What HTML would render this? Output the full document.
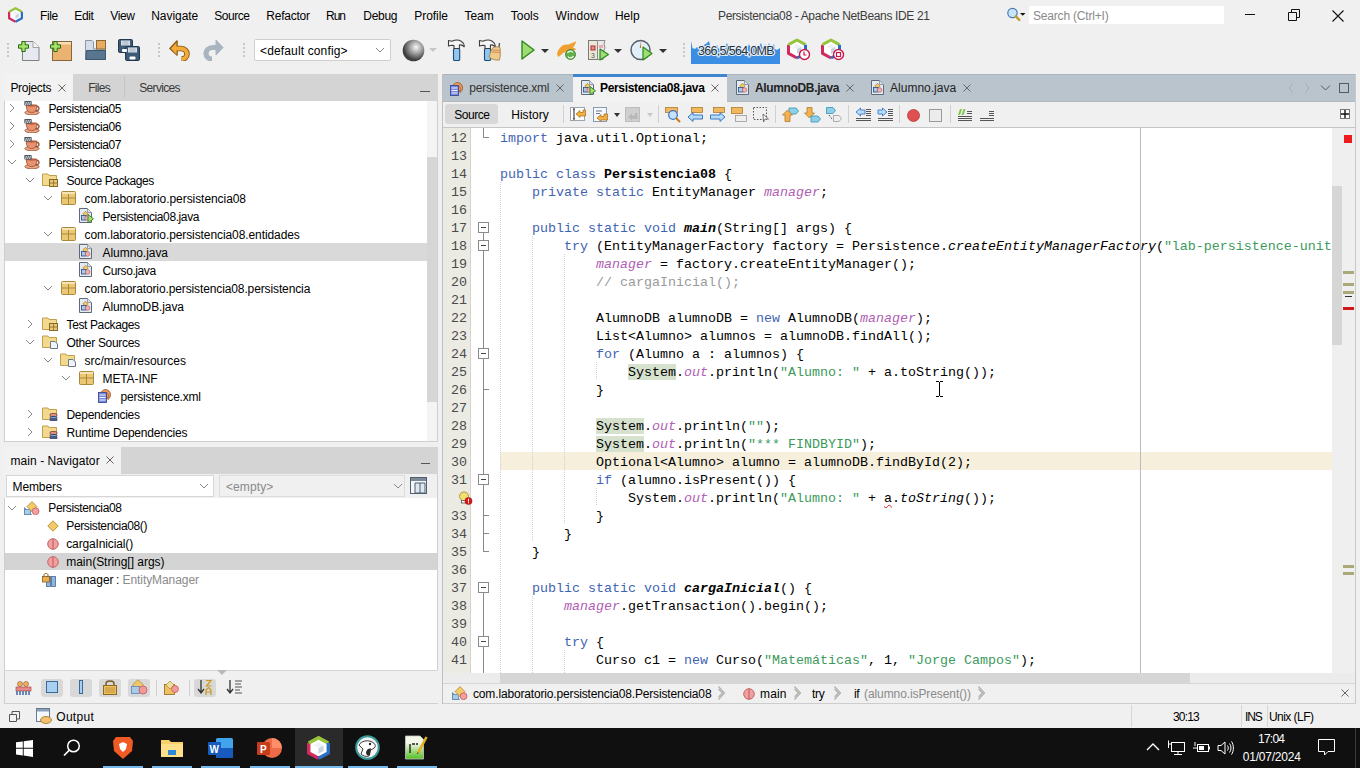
<!DOCTYPE html>
<html><head><meta charset="utf-8">
<style>
*{box-sizing:border-box;margin:0;padding:0}
html,body{width:1360px;height:768px;overflow:hidden;background:#f0f0f0;font-family:"Liberation Sans",sans-serif;font-size:12px;color:#000}
.a{position:absolute;overflow:visible}
.t{position:absolute;white-space:nowrap;line-height:14px;letter-spacing:-0.3px}
.l{position:absolute;left:500px;width:832px;overflow:hidden;white-space:pre;font-family:"Liberation Mono",monospace;font-size:13.333px;line-height:18px;height:18px;color:#000}
.k{color:#3f64b2}
.s{color:#3c9a5c}
.c{color:#9a9a9a}
.f{color:#b060b4;font-style:italic}
.b{font-weight:bold}
.i{font-style:italic}
.sy{background:#d6e2ce;display:inline-block;height:16px;vertical-align:top;box-shadow:0 -2px 0 #d6e2ce}
.err{text-decoration:underline wavy #e02020;text-decoration-thickness:1px;text-underline-offset:2px}
.ln{position:absolute;left:443px;width:24px;text-align:right;font-family:"Liberation Mono",monospace;font-size:13.333px;line-height:18px;color:#4a4a4a}

</style></head><body>
<svg width="0" height="0" style="position:absolute"><defs>

<symbol id="nb" viewBox="0 0 16 16">
 <path d="M8 0.8 L14.8 4.5 L14.8 11.5 L8 15.2 L1.2 11.5 L1.2 4.5 Z" fill="#fff"/>
 <path d="M1.2 4.5 L1.2 11.5 L8 15.2" fill="none" stroke="#d02a5e" stroke-width="2.4" stroke-linejoin="round"/>
 <path d="M1.2 4.5 L8 0.8 L14.8 4.5" fill="none" stroke="#96c43a" stroke-width="2.4" stroke-linejoin="round"/>
 <path d="M14.8 4.5 L14.8 11.5 L8 15.2" fill="none" stroke="#2b6fc4" stroke-width="2.4" stroke-linejoin="round"/>
 <path d="M8 8 L11.5 6 L11.5 10 L8 12 Z" fill="#c8d4e0"/>
 <path d="M8 8 L4.5 6 L8 4 L11.5 6 Z" fill="#eef2f6"/>
</symbol>
<symbol id="newfile" viewBox="0 0 22 22">
 <path d="M4.5 1.5 H15 L21 7.5 V20.5 H4.5 Z" fill="#e6eaf0" stroke="#808080"/>
 <path d="M15 1.5 V7.5 H21" fill="#f8f9fb" stroke="#a0a0a0"/>
 <path d="M3.8 1.5 H7.2 V4.8 H10.5 V8.2 H7.2 V11.5 H3.8 V8.2 H0.5 V4.8 H3.8 Z" fill="#a6e36a" stroke="#2a6a12" stroke-width="1"/>
</symbol>
<symbol id="newproj" viewBox="0 0 22 22">
 <rect x="2.5" y="1.5" width="19" height="19" fill="#ecb272" stroke="#87673a"/>
 <rect x="3" y="2" width="18" height="2.5" fill="#f8dcb4"/>
 <path d="M3.8 1.5 H7.2 V4.8 H10.5 V8.2 H7.2 V11.5 H3.8 V8.2 H0.5 V4.8 H3.8 Z" fill="#a6e36a" stroke="#2a6a12" stroke-width="1"/>
</symbol>
<symbol id="openproj" viewBox="0 0 22 22">
 <path d="M1.5 20.5 V1.5 H8 L9.5 3 V10 H21.5 V20.5 Z" fill="#d6dde6" stroke="#8a96a4"/>
 <rect x="12.5" y="1.5" width="9" height="8.5" fill="#e8ac60" stroke="#8a6a3a"/>
 <path d="M1.8 20.5 L2.5 11.5 H21.5 V20.5 Z" fill="#58768f" stroke="#3e566e"/>
</symbol>
<symbol id="saveall" viewBox="0 0 22 22">
 <rect x="0.5" y="0.5" width="14" height="13" rx="1.2" fill="#3d5a79" stroke="#22384f"/>
 <rect x="3" y="1.5" width="9" height="5" fill="#d8dee6"/>
 <path d="M4.5 3 H10.5 M4.5 5 H10.5" stroke="#9aa8b8" stroke-width="0.8"/>
 <rect x="7.5" y="7.5" width="14" height="14" rx="1.2" fill="#3d5a79" stroke="#22384f"/>
 <rect x="10" y="8.5" width="9" height="5" fill="#d8dee6"/>
 <path d="M11.5 10 H17.5 M11.5 12 H17.5" stroke="#9aa8b8" stroke-width="0.8"/>
 <rect x="11.5" y="17.5" width="6" height="3" rx="1" fill="#fff"/>
 <rect x="4" y="10" width="5" height="3" rx="1" fill="#fff"/>
</symbol>
<symbol id="undo" viewBox="0 0 22 22">
 <path d="M6 9.5 H11.5 C15.5 9.5 18 12 18 15 C18 18 15.5 20 12.5 20" fill="none" stroke="#8a5a14" stroke-width="5.6"/>
 <path d="M1 9.5 L8 2 L8 16 Z" fill="#8a5a14" stroke="#8a5a14" stroke-width="1.6" stroke-linejoin="round"/>
 <path d="M6 9.5 H11.5 C15.5 9.5 18 12 18 15 C18 18 15.5 20 12.5 20" fill="none" stroke="#f2aa3a" stroke-width="3.8"/>
 <path d="M1.8 9.5 L7.5 3.5 L7.5 15.5 Z" fill="#f2aa3a"/>
</symbol>
<symbol id="redo" viewBox="0 0 22 22">
 <path d="M16 8.5 H11 C6.5 8.5 4 11.5 4 14.5 C4 17.5 6.5 20 10 20" fill="none" stroke="#a8b5c1" stroke-width="5.2"/>
 <path d="M21 8.5 L14 1 L14 16 Z" fill="#a8b5c1" stroke="#a8b5c1" stroke-width="1" stroke-linejoin="round"/>
</symbol>
<symbol id="globe" viewBox="0 0 24 24">
 <defs><radialGradient id="gg" cx="0.62" cy="0.35" r="0.75"><stop offset="0" stop-color="#f8f8f8"/><stop offset="0.35" stop-color="#a8a8a8"/><stop offset="0.8" stop-color="#3a3a3a"/><stop offset="1" stop-color="#505050"/></radialGradient></defs>
 <circle cx="11.5" cy="11.5" r="10.8" fill="url(#gg)"/>
</symbol>
<symbol id="hammer" viewBox="0 0 20 22">
 <rect x="6.5" y="9.5" width="6.2" height="12" rx="1.3" fill="#92c6ee" stroke="#1c4a78" stroke-width="1.1"/>
 <path d="M1.5 1.5 L5 2.3 C8 0.8 12 0.8 14.2 2.2 C16.6 3.8 17.6 5.8 17.2 7.8 C15.8 6.2 13.8 5.6 12.4 6 L12.4 9.5 L7 9.5 L7 6.6 L4.8 6.2 L1.5 7 Z" fill="#f6f6f6" stroke="#3c3c3c" stroke-width="1.1" stroke-linejoin="round"/>
</symbol>
<symbol id="clean" viewBox="0 0 24 22">
 <rect x="6.5" y="9.5" width="6.2" height="12" rx="1.3" fill="#92c6ee" stroke="#1c4a78" stroke-width="1.1"/>
 <path d="M1.5 1.5 L5 2.3 C8 0.8 12 0.8 14.2 2.2 C16.6 3.8 17.6 5.8 17.2 7.8 C15.8 6.2 13.8 5.6 12.4 6 L12.4 9.5 L7 9.5 L7 6.6 L4.8 6.2 L1.5 7 Z" fill="#f6f6f6" stroke="#3c3c3c" stroke-width="1.1" stroke-linejoin="round"/>
 <path d="M21.5 4 L21 8" stroke="#555" stroke-width="1.4"/>
 <path d="M15 8.5 C17 7.5 20 7.5 22 8.5 C22.5 12 22.5 17 21.5 21 C18 21.5 14 20.5 11 18 C12 15 13 11 15 8.5 Z" fill="#eccb8c" stroke="#a07a3a" stroke-width="0.8"/>
 <path d="M14.5 11 L21.8 11.5 M14 13 L22 13.5" stroke="#d8804a" stroke-width="0.9"/>
</symbol>
<symbol id="run" viewBox="0 0 16 22">
 <path d="M2 2 L14 11 L2 20 Z" fill="#9fdc72" stroke="#2e8a1e" stroke-width="1.4" stroke-linejoin="round"/>
</symbol>
<symbol id="ddarrow" viewBox="0 0 8 6">
 <path d="M0 1 L8 1 L4 5 Z" fill="#333"/>
</symbol>
<symbol id="runreload" viewBox="0 0 22 22">
 <path d="M1 15 C2 10 6 5 11 5.5 C14 5.8 16 3 20.5 2.5 C19 5 18.5 7 17 8.5 C19 9 19.5 10 20 11 L15 11.5 C12 12 8 12.5 5 16 L2 18 Z" fill="#f0a030"/>
 <circle cx="14.5" cy="15.5" r="5" fill="#5fb04a" stroke="#3a7a2a" stroke-width="0.8"/>
 <path d="M11.5 14 C12 12 16 11.5 17 13.5 M17.5 17 C17 19 13 19.5 12 17.5" fill="none" stroke="#e8f4e0" stroke-width="1.3"/>
</symbol>
<symbol id="debug" viewBox="0 0 24 22">
 <rect x="2.5" y="1.5" width="9" height="19" fill="#ece6d6" stroke="#7a7a7a"/>
 <path d="M11.5 1.5 H19 L18 5 L19 9 L17 13 L18 17 L17 20.5 H11.5 Z" fill="#e9e9ec" stroke="#8a8a8a"/>
 <rect x="5" y="7" width="4" height="4" fill="#e88" stroke="#a33"/>
 <text x="5" y="19" font-size="7" fill="#555" font-family="Liberation Sans">3</text>
 <rect x="13" y="6" width="4" height="3" fill="#f4a8a8"/>
 <path d="M14 10 L22.5 15.5 L14 21 Z" fill="#9fdc72" stroke="#2e8a1e" stroke-width="1.2" stroke-linejoin="round"/>
</symbol>
<symbol id="profile" viewBox="0 0 24 22">
 <circle cx="10.5" cy="11" r="9.5" fill="#e2eef8" stroke="#5a6068" stroke-width="1.5"/>
 <path d="M10.5 2 L11.2 9 L9.8 9 Z" fill="#d07a30"/>
 <path d="M13 8 L22 14.5 L13 21 Z" fill="#9fdc72" stroke="#2e8a1e" stroke-width="1.2" stroke-linejoin="round"/>
</symbol>
<symbol id="grip" viewBox="0 0 4 16">
 <rect x="1" y="1" width="2" height="2" fill="#c8c8c8"/><rect x="1" y="5" width="2" height="2" fill="#c8c8c8"/><rect x="1" y="9" width="2" height="2" fill="#c8c8c8"/><rect x="1" y="13" width="2" height="2" fill="#c8c8c8"/>
</symbol>
<symbol id="chevR" viewBox="0 0 8 10"><path d="M2 1 L6 5 L2 9" fill="none" stroke="#8a8a8a" stroke-width="1"/></symbol>
<symbol id="chevD" viewBox="0 0 10 8"><path d="M1 2 L5 6 L9 2" fill="none" stroke="#8a8a8a" stroke-width="1"/></symbol>
<symbol id="cup" viewBox="0 0 16 14">
 <ellipse cx="8" cy="11.6" rx="7.2" ry="2.2" fill="#eaa888" stroke="#9a5234" stroke-width="0.8"/>
 <path d="M2.3 4.2 H13 C13 9.6 10.8 11.6 7.6 11.6 C4.5 11.6 2.3 9.6 2.3 4.2 Z" fill="#e89270" stroke="#9a5234" stroke-width="0.9"/>
 <ellipse cx="7.6" cy="4.6" rx="5" ry="1.1" fill="#b8603e"/>
 <path d="M12.6 5.6 C16 4.8 16 9.8 11.6 10" fill="none" stroke="#9a5234" stroke-width="1.3"/>
 <rect x="0.3" y="0" width="7.4" height="4.6" rx="0.8" fill="#4e5864"/>
 <path d="M1.6 4 L2.4 1 M3.6 4 L4.4 1 M5.6 4 L6.4 1" stroke="#fff" stroke-width="0.8"/>
</symbol>
<symbol id="srcpkg" viewBox="0 0 16 14">
 <path d="M0.5 12.5 V1 H6 L7 2.5 H14.5 V12.5 Z" fill="#f2d98e" stroke="#c2a04a"/>
 <rect x="7.5" y="6.5" width="8" height="7" fill="#e8c978" stroke="#8a6a2a"/>
 <path d="M7.5 10 H15.5 M11.5 6.5 V13.5" stroke="#8a6a2a" stroke-width="0.8"/>
</symbol>
<symbol id="pkg" viewBox="0 0 15 14">
 <rect x="0.5" y="0.5" width="14" height="13" rx="1" fill="#ecc874" stroke="#a98a3c"/>
 <path d="M0.5 7 H14.5 M7.5 0.5 V13.5" stroke="#a98a3c" stroke-width="1"/>
 <rect x="1" y="1" width="13" height="2" fill="#f7e4b4"/>
</symbol>
<symbol id="java" viewBox="0 0 16 16">
 <path d="M1.5 1.5 H9.5 L13.5 5.5 V15.5 H1.5 Z" fill="#e4eaf1" stroke="#5e6a78"/>
 <path d="M9.5 1.5 V5.5 H13.5" fill="#dde3ea" stroke="#8a96a4" stroke-width="0.9"/>
 <path d="M7.5 4.3 L10.2 7 L7.5 9.7 L4.8 7 Z" fill="#f2c66a" stroke="#a8842c" stroke-width="0.7"/>
 <rect x="3.5" y="8.5" width="4.5" height="4.5" fill="#a8c8e8" stroke="#2a4a80" stroke-width="0.8"/>
 <circle cx="9.6" cy="11" r="2.3" fill="#f2b0b0" stroke="#b05a5a" stroke-width="0.6"/>
</symbol>
<symbol id="javamain" viewBox="0 0 16 16">
 <path d="M1.5 1.5 H9.5 L13.5 5.5 V15.5 H1.5 Z" fill="#e4eaf1" stroke="#5e6a78"/>
 <path d="M9.5 1.5 V5.5 H13.5" fill="#dde3ea" stroke="#8a96a4" stroke-width="0.9"/>
 <path d="M7.5 4.3 L10.2 7 L7.5 9.7 L4.8 7 Z" fill="#f2c66a" stroke="#a8842c" stroke-width="0.7"/>
 <rect x="3.5" y="8.5" width="4.5" height="4.5" fill="#a8c8e8" stroke="#2a4a80" stroke-width="0.8"/>
 <circle cx="9" cy="11" r="2.2" fill="#f2b0b0" stroke="#b05a5a" stroke-width="0.6"/>
 <path d="M10 7.5 L15.5 11.8 L10 16 Z" fill="#a8e070" stroke="#2e7a1e" stroke-width="0.9" stroke-linejoin="round"/>
</symbol>
<symbol id="folderdoc" viewBox="0 0 16 14">
 <path d="M0.5 12.5 V1 H6 L7 2.5 H14.5 V12.5 Z" fill="#f2d98e" stroke="#c2a04a"/>
 <path d="M8.5 6.5 H13 L15.5 9 V13.5 H8.5 Z" fill="#eef3f8" stroke="#6a7a8a"/>
</symbol>
<symbol id="foldertest" viewBox="0 0 16 14">
 <path d="M0.5 12.5 V1 H6 L7 2.5 H14.5 V12.5 Z" fill="#f2d98e" stroke="#c2a04a"/>
 <rect x="7.5" y="6.5" width="8" height="7" fill="#e8c978" stroke="#8a6a2a"/>
 <path d="M7.5 10 H15.5 M11.5 6.5 V13.5" stroke="#8a6a2a" stroke-width="0.8"/>
</symbol>
<symbol id="folderdep" viewBox="0 0 16 14">
 <path d="M0.5 12.5 V1 H6 L7 2.5 H14.5 V12.5 Z" fill="#f2d98e" stroke="#c2a04a"/>
 <rect x="8" y="6.5" width="7" height="3" rx="1.4" fill="#d89080" stroke="#7a3a3a" stroke-width="0.8"/>
 <rect x="8" y="9.5" width="7" height="2.5" rx="1.2" fill="#8aa0c8" stroke="#2a3a6a" stroke-width="0.8"/>
 <rect x="8" y="11.8" width="7" height="2.2" rx="1" fill="#5a6a9a" stroke="#2a3a6a" stroke-width="0.8"/>
</symbol>
<symbol id="xml" viewBox="0 0 13 14">
 <path d="M3.5 3 C5 -0.5 11.5 -0.5 12.5 5 C12.8 7.5 11.5 9.5 10 10.5 L8 6 Z" fill="#e89a58" stroke="#9a5424" stroke-width="0.8"/>
 <path d="M9 4 C10.5 5 11 7 10.2 9.5" fill="none" stroke="#c06a30" stroke-width="0.9"/>
 <rect x="0.5" y="3.5" width="8" height="10" fill="#7888d8" stroke="#3a4a98" stroke-width="0.9"/>
 <path d="M1.5 6 H7.5 M1.5 8.5 H7.5 M1.5 11 H7.5" stroke="#f0f4ff" stroke-width="1.1"/>
</symbol>
<symbol id="cls" viewBox="0 0 16 14">
 <path d="M0.5 13.5 V6.5 L7.5 13.5 Z" fill="#a8cce8" stroke="#5a86b0" stroke-width="0.8"/>
 <rect x="0.5" y="8.5" width="6" height="5" fill="#a8cce8" stroke="#5a86b0" stroke-width="0.8"/>
 <path d="M8 0.6 L13 5.6 L8 10.6 L3 5.6 Z" fill="#f2ca6a" stroke="#b08a30" stroke-width="0.8"/>
 <circle cx="11.6" cy="10.2" r="3.4" fill="#f2a0a0" stroke="#c05a5a" stroke-width="0.8"/>
</symbol>
<symbol id="ctor" viewBox="0 0 12 12">
 <path d="M6 0.8 L11.2 6 L6 11.2 L0.8 6 Z" fill="#f3c96a" stroke="#b08a30" stroke-width="0.9"/>
</symbol>
<symbol id="meth" viewBox="0 0 12 12">
 <circle cx="6" cy="6" r="5.3" fill="#f0a0a0" stroke="#c05a5a" stroke-width="0.9"/>
 <path d="M6 0.8 V11.2" stroke="#c05a5a" stroke-width="1"/>
</symbol>
<symbol id="field" viewBox="0 0 18 14">
 <rect x="4.5" y="3.5" width="4" height="10" fill="#8ab8e0" stroke="#4a6a90" stroke-width="0.8"/>
 <rect x="9.5" y="3.5" width="4" height="10" fill="#8ab8e0" stroke="#4a6a90" stroke-width="0.8"/>
 <rect x="0.5" y="3.5" width="7" height="5.5" fill="#e8b050" stroke="#8a5a20" stroke-width="0.8"/>
 <path d="M2 3.5 V2 C2 0 6 0 6 2 V3.5" fill="none" stroke="#8a5a20" stroke-width="1"/>
</symbol>
<symbol id="closex" viewBox="0 0 8 8"><path d="M0.5 0.5 L7.5 7.5 M7.5 0.5 L0.5 7.5" stroke="#666" stroke-width="1"/></symbol>

</defs></svg>
<div id="root" class="a" style="left:0;top:0;width:1360px;height:768px">
<div class="a" style="left:0px;top:0px;width:1360px;height:74px;background:#f0f0f0"></div>
<svg class="a" style="left:8px;top:7px;" width="15" height="16"><use href="#nb"/></svg>
<div class="t" style="left:40.00px;top:9px;letter-spacing:-0.375px;">File</div>
<div class="t" style="left:74.25px;top:9px;letter-spacing:-0.375px;">Edit</div>
<div class="t" style="left:110.25px;top:9px;letter-spacing:-0.375px;">View</div>
<div class="t" style="left:151.25px;top:9px;letter-spacing:-0.054px;">Navigate</div>
<div class="t" style="left:214.25px;top:9px;letter-spacing:-0.450px;">Source</div>
<div class="t" style="left:266.25px;top:9px;letter-spacing:-0.232px;">Refactor</div>
<div class="t" style="left:326.00px;top:9px;letter-spacing:-1.000px;">Run</div>
<div class="t" style="left:363.25px;top:9px;letter-spacing:-0.281px;">Debug</div>
<div class="t" style="left:414.25px;top:9px;letter-spacing:-0.042px;">Profile</div>
<div class="t" style="left:464.50px;top:9px;letter-spacing:-0.042px;">Team</div>
<div class="t" style="left:510.75px;top:9px;letter-spacing:0.000px;">Tools</div>
<div class="t" style="left:555.50px;top:9px;letter-spacing:0.100px;">Window</div>
<div class="t" style="left:615.00px;top:9px;letter-spacing:-0.042px;">Help</div>
<div class="t" style="left:718.00px;top:9px;letter-spacing:-0.355px;color:#3c3c3c">Persistencia08 - Apache NetBeans IDE 21</div>
<svg class="a" style="left:1006px;top:6px" width="22" height="18"><circle cx="6.5" cy="7" r="4.7" fill="#c8e4fc" stroke="#4a78b0" stroke-width="1.2"/><path d="M9.8 10.3 L13.3 14" stroke="#c09a28" stroke-width="2.4" stroke-linecap="round"/><path d="M14 7 L19.5 7 L16.75 9.8 Z" fill="#111"/></svg>
<div class="a" style="left:1029px;top:6px;width:195px;height:18px;background:#fff"></div>
<div class="t" style="left:1033.00px;top:9px;letter-spacing:-0.188px;color:#8a8a8a">Search (Ctrl+I)</div>
<div class="a" style="left:1245px;top:14px;width:10px;height:1px;background:#111"></div>
<svg class="a" style="left:1288px;top:9px" width="12" height="12"><path d="M0.5 3.5 H8.5 V11.5 H0.5 Z M3.5 3.5 V0.5 H11.5 V8.5 H8.5" fill="none" stroke="#111" stroke-width="1"/></svg>
<svg class="a" style="left:1332px;top:10px" width="12" height="12"><path d="M0.5 0.5 L11.5 11.5 M11.5 0.5 L0.5 11.5" stroke="#111" stroke-width="1.1"/></svg>
<svg class="a" style="left:6px;top:42px;" width="4" height="16"><use href="#grip"/></svg>
<svg class="a" style="left:18px;top:40px;" width="22" height="22"><use href="#newfile"/></svg>
<svg class="a" style="left:50px;top:40px;" width="22" height="22"><use href="#newproj"/></svg>
<svg class="a" style="left:84px;top:39px;" width="22" height="22"><use href="#openproj"/></svg>
<svg class="a" style="left:118px;top:39px;" width="22" height="22"><use href="#saveall"/></svg>
<svg class="a" style="left:157px;top:42px;" width="4" height="16"><use href="#grip"/></svg>
<svg class="a" style="left:169px;top:39px;" width="22" height="22"><use href="#undo"/></svg>
<svg class="a" style="left:202px;top:39px;" width="22" height="22"><use href="#redo"/></svg>
<svg class="a" style="left:242px;top:42px;" width="4" height="16"><use href="#grip"/></svg>
<div class="a" style="left:254px;top:39px;width:137px;height:22px;background:#fff;border:1px solid #cfcfcf;border-radius:2px"></div>
<div class="t" style="left:260.00px;top:44px;letter-spacing:0.142px;">&lt;default config&gt;</div>
<svg class="a" style="left:375px;top:46px;" width="10" height="8"><use href="#chevD"/></svg>
<svg class="a" style="left:402px;top:39px;" width="24" height="24"><use href="#globe"/></svg>
<svg class="a" style="left:429px;top:47px" width="8" height="6"><path d="M0 1 L8 1 L4 5 Z" fill="#c8c8c8"/></svg>
<svg class="a" style="left:447px;top:39px;" width="20" height="22"><use href="#hammer"/></svg>
<svg class="a" style="left:478px;top:39px;" width="24" height="22"><use href="#clean"/></svg>
<svg class="a" style="left:520px;top:39px;" width="16" height="22"><use href="#run"/></svg>
<svg class="a" style="left:541px;top:48px;" width="8" height="6"><use href="#ddarrow"/></svg>
<svg class="a" style="left:556px;top:39px;" width="22" height="22"><use href="#runreload"/></svg>
<svg class="a" style="left:586px;top:39px;" width="24" height="22"><use href="#debug"/></svg>
<svg class="a" style="left:614px;top:48px;" width="8" height="6"><use href="#ddarrow"/></svg>
<svg class="a" style="left:630px;top:39px;" width="24" height="22"><use href="#profile"/></svg>
<svg class="a" style="left:659px;top:48px;" width="8" height="6"><use href="#ddarrow"/></svg>
<svg class="a" style="left:682px;top:42px;" width="4" height="16"><use href="#grip"/></svg>
<svg class="a" style="left:691px;top:40px" width="89" height="24">
<path d="M0 24 V1 L1.5 8 L4 9 L6 7 L8 9 L10 8 L13 5 L16 3 L18 1 L20 9 L24 8 L26 5 L28 9 L34 7 L36 3 L38 9 L46 9 L48 6 L50 9 L56 9 L58 4 L60 9 L64 5 L66 9 L70 3 L72 9 L74 4 L76 9 L78 3 L80 9 L83 4 L84 9 L86 10 L89 8 V24 Z" fill="#3b8ee4"/>
</svg>
<svg class="a" style="left:691px;top:40px" width="89" height="24"><text x="7" y="15" font-family="Liberation Sans" font-size="12.5" letter-spacing="-0.68" fill="#26303a" stroke="#e4f0fb" stroke-width="2.2" paint-order="stroke" stroke-linejoin="round">366,5/564,0MB</text></svg>
<svg class="a" style="left:787px;top:38px" width="24" height="24"><use href="#nb" x="0" y="0" width="20" height="22"/><circle cx="17.5" cy="16.5" r="5" fill="#fff" stroke="#c8184a" stroke-width="1.4"/><path d="M17 13.5 V17 H19.5" stroke="#c8184a" stroke-width="1.2" fill="none"/></svg>
<svg class="a" style="left:821px;top:38px" width="24" height="24"><use href="#nb" x="0" y="0" width="20" height="22"/><circle cx="17.5" cy="16.5" r="5" fill="#fff" stroke="#c8184a" stroke-width="1.4"/><rect x="15.5" y="14.5" width="4" height="4" fill="none" stroke="#c8184a" stroke-width="1.2"/></svg>
<div class="a" style="left:4px;top:74px;width:434px;height:27px;background:#d4d4d4"></div>
<div class="a" style="left:4px;top:74px;width:69px;height:27px;background:#f2f2f2"></div>
<div class="t" style="left:10.40px;top:81px;letter-spacing:-0.311px;">Projects</div>
<svg class="a" style="left:58px;top:84px;" width="8" height="8"><use href="#closex"/></svg>
<div class="t" style="left:88.25px;top:81px;letter-spacing:-0.719px;color:#3a3a3a">Files</div>
<div class="a" style="left:124px;top:77px;width:1px;height:21px;background:#c4c4c4"></div>
<div class="t" style="left:139.25px;top:81px;letter-spacing:-0.679px;color:#3a3a3a">Services</div>
<div class="a" style="left:420px;top:91px;width:10px;height:1px;background:#555"></div>
<div class="a" style="left:4px;top:101px;width:434px;height:340px;background:#fff;border-left:1px solid #cfcfcf"></div>
<div class="a" style="left:427px;top:101px;width:10px;height:340px;background:#f4f4f4"></div>
<div class="a" style="left:427px;top:157px;width:10px;height:245px;background:#d6d6d6"></div>
<div class="a" style="left:437px;top:101px;width:1px;height:341px;background:#cfcfcf"></div>
<div class="a" style="left:4px;top:441px;width:434px;height:1px;background:#cfcfcf"></div>
<svg class="a" style="left:8px;top:103px;" width="8" height="10"><use href="#chevR"/></svg>
<svg class="a" style="left:24px;top:101px;" width="16" height="14"><use href="#cup"/></svg>
<div class="t" style="left:48.50px;top:102px;letter-spacing:-0.442px;">Persistencia05</div>
<svg class="a" style="left:8px;top:121px;" width="8" height="10"><use href="#chevR"/></svg>
<svg class="a" style="left:24px;top:119px;" width="16" height="14"><use href="#cup"/></svg>
<div class="t" style="left:48.50px;top:120px;letter-spacing:-0.442px;">Persistencia06</div>
<svg class="a" style="left:8px;top:139px;" width="8" height="10"><use href="#chevR"/></svg>
<svg class="a" style="left:24px;top:137px;" width="16" height="14"><use href="#cup"/></svg>
<div class="t" style="left:48.50px;top:138px;letter-spacing:-0.442px;">Persistencia07</div>
<svg class="a" style="left:7px;top:158px;" width="10" height="8"><use href="#chevD"/></svg>
<svg class="a" style="left:24px;top:155px;" width="16" height="14"><use href="#cup"/></svg>
<div class="t" style="left:48.50px;top:156px;letter-spacing:-0.442px;">Persistencia08</div>
<svg class="a" style="left:25px;top:176px;" width="10" height="8"><use href="#chevD"/></svg>
<svg class="a" style="left:42px;top:173px;" width="16" height="14"><use href="#srcpkg"/></svg>
<div class="t" style="left:66.50px;top:174px;letter-spacing:-0.450px;">Source Packages</div>
<svg class="a" style="left:43px;top:194px;" width="10" height="8"><use href="#chevD"/></svg>
<svg class="a" style="left:61px;top:191px;" width="15" height="14"><use href="#pkg"/></svg>
<div class="t" style="left:84.50px;top:192px;letter-spacing:-0.065px;">com.laboratorio.persistencia08</div>
<svg class="a" style="left:78px;top:207px;" width="16" height="16"><use href="#javamain"/></svg>
<div class="t" style="left:102.50px;top:210px;letter-spacing:-0.396px;">Persistencia08.java</div>
<svg class="a" style="left:43px;top:230px;" width="10" height="8"><use href="#chevD"/></svg>
<svg class="a" style="left:61px;top:227px;" width="15" height="14"><use href="#pkg"/></svg>
<div class="t" style="left:84.50px;top:228px;letter-spacing:-0.088px;">com.laboratorio.persistencia08.entidades</div>
<div class="a" style="left:5px;top:243px;width:422px;height:18px;background:#d9d9d9"></div>
<svg class="a" style="left:78px;top:243px;" width="16" height="16"><use href="#java"/></svg>
<div class="t" style="left:102.50px;top:246px;letter-spacing:-0.053px;">Alumno.java</div>
<svg class="a" style="left:78px;top:261px;" width="16" height="16"><use href="#java"/></svg>
<div class="t" style="left:102.50px;top:264px;letter-spacing:-0.419px;">Curso.java</div>
<svg class="a" style="left:43px;top:284px;" width="10" height="8"><use href="#chevD"/></svg>
<svg class="a" style="left:61px;top:281px;" width="15" height="14"><use href="#pkg"/></svg>
<div class="t" style="left:84.50px;top:282px;letter-spacing:-0.118px;">com.laboratorio.persistencia08.persistencia</div>
<svg class="a" style="left:78px;top:297px;" width="16" height="16"><use href="#java"/></svg>
<div class="t" style="left:102.50px;top:300px;letter-spacing:-0.104px;">AlumnoDB.java</div>
<svg class="a" style="left:26px;top:319px;" width="8" height="10"><use href="#chevR"/></svg>
<svg class="a" style="left:42px;top:317px;" width="16" height="14"><use href="#foldertest"/></svg>
<div class="t" style="left:66.50px;top:318px;letter-spacing:-0.375px;">Test Packages</div>
<svg class="a" style="left:25px;top:338px;" width="10" height="8"><use href="#chevD"/></svg>
<svg class="a" style="left:42px;top:335px;" width="16" height="14"><use href="#folderdoc"/></svg>
<div class="t" style="left:66.50px;top:336px;letter-spacing:-0.323px;">Other Sources</div>
<svg class="a" style="left:43px;top:356px;" width="10" height="8"><use href="#chevD"/></svg>
<svg class="a" style="left:60px;top:353px;" width="16" height="14"><use href="#folderdoc"/></svg>
<div class="t" style="left:84.50px;top:354px;letter-spacing:0.007px;">src/main/resources</div>
<svg class="a" style="left:61px;top:374px;" width="10" height="8"><use href="#chevD"/></svg>
<svg class="a" style="left:79px;top:371px;" width="15" height="14"><use href="#pkg"/></svg>
<div class="t" style="left:102.50px;top:372px;letter-spacing:-0.107px;">META-INF</div>
<svg class="a" style="left:98px;top:389px;" width="13" height="14"><use href="#xml"/></svg>
<div class="t" style="left:120.50px;top:390px;letter-spacing:-0.205px;">persistence.xml</div>
<svg class="a" style="left:26px;top:409px;" width="8" height="10"><use href="#chevR"/></svg>
<svg class="a" style="left:42px;top:407px;" width="16" height="14"><use href="#folderdep"/></svg>
<div class="t" style="left:66.50px;top:408px;letter-spacing:-0.295px;">Dependencies</div>
<svg class="a" style="left:26px;top:427px;" width="8" height="10"><use href="#chevR"/></svg>
<svg class="a" style="left:42px;top:425px;" width="16" height="14"><use href="#folderdep"/></svg>
<div class="t" style="left:66.50px;top:426px;letter-spacing:-0.197px;">Runtime Dependencies</div>
<div class="a" style="left:4px;top:447px;width:434px;height:27px;background:#d4d4d4"></div>
<div class="a" style="left:4px;top:447px;width:117px;height:27px;background:#f2f2f2"></div>
<div class="t" style="left:10.40px;top:454px;letter-spacing:0.080px;">main - Navigator</div>
<svg class="a" style="left:106px;top:456px;" width="8" height="8"><use href="#closex"/></svg>
<div class="a" style="left:421px;top:463px;width:9px;height:1px;background:#555"></div>
<div class="a" style="left:4px;top:474px;width:434px;height:24px;background:#f0f0f0"></div>
<div class="a" style="left:6px;top:475px;width:208px;height:22px;background:#fff;border:1px solid #d6d6d6"></div>
<div class="t" style="left:12.50px;top:480px;letter-spacing:-0.100px;">Members</div>
<svg class="a" style="left:199px;top:482px;" width="10" height="8"><use href="#chevD"/></svg>
<div class="a" style="left:219px;top:475px;width:186px;height:22px;background:#f0f0f0;border:1px solid #dcdcdc"></div>
<div class="t" style="left:226.00px;top:480px;letter-spacing:0.092px;color:#8a8a8a">&lt;empty&gt;</div>
<svg class="a" style="left:393px;top:482px;" width="10" height="8"><use href="#chevD"/></svg>
<svg class="a" style="left:410px;top:477px" width="18" height="18"><rect x="0.5" y="0.5" width="16" height="16" fill="#f4f6f8" stroke="#50606e"/><rect x="1" y="1" width="15" height="3" fill="#7a8a98"/><path d="M5 6 H15 V16 H5 Z M10 6 V16" fill="#dde8f2" stroke="#50606e"/></svg>
<div class="a" style="left:4px;top:498px;width:434px;height:172px;background:#fff;border-left:1px solid #cfcfcf"></div>
<div class="a" style="left:437px;top:474px;width:1px;height:229px;background:#cfcfcf"></div>
<div class="a" style="left:5px;top:553px;width:432px;height:17px;background:#d4d4d4"></div>
<svg class="a" style="left:7px;top:504px;" width="10" height="8"><use href="#chevD"/></svg>
<svg class="a" style="left:24px;top:501px;" width="16" height="14"><use href="#cls"/></svg>
<div class="t" style="left:48.30px;top:501px;letter-spacing:-0.396px;">Persistencia08</div>
<svg class="a" style="left:47px;top:520px;" width="12" height="12"><use href="#ctor"/></svg>
<div class="t" style="left:66.25px;top:519px;letter-spacing:-0.367px;">Persistencia08()</div>
<svg class="a" style="left:47px;top:538px;" width="12" height="12"><use href="#meth"/></svg>
<div class="t" style="left:66.25px;top:537px;letter-spacing:-0.135px;">cargaInicial()</div>
<svg class="a" style="left:47px;top:556px;" width="12" height="12"><use href="#meth"/></svg>
<div class="t" style="left:66.25px;top:555px;letter-spacing:-0.025px;">main(String[] args)</div>
<svg class="a" style="left:42px;top:573px;" width="18" height="14"><use href="#field"/></svg>
<div class="t" style="left:66.25px;top:573px;letter-spacing:-0.013px;">manager</div>
<div class="t" style="left:116px;top:573px;">:</div>
<div class="t" style="left:122.50px;top:573px;letter-spacing:-0.073px;color:#8a8a8a">EntityManager</div>
<div class="a" style="left:443px;top:74px;width:912px;height:28px;background:#bac4cd"></div>
<div class="a" style="left:443px;top:74px;width:912px;height:1px;background:#aab4be"></div>
<div class="a" style="left:443px;top:101px;width:912px;height:1px;background:#b0b8c0"></div>
<div class="a" style="left:573px;top:74px;width:154px;height:28px;background:#f2f2f2"></div>
<div class="a" style="left:573px;top:74px;width:154px;height:3px;background:#3f86d0"></div>
<svg class="a" style="left:450px;top:82px;" width="13" height="14"><use href="#xml"/></svg>
<div class="t" style="left:469.25px;top:81px;letter-spacing:-0.223px;color:#333">persistence.xml</div>
<svg class="a" style="left:556px;top:84px;" width="8" height="8"><use href="#closex"/></svg>
<svg class="a" style="left:580px;top:79px;" width="16" height="16"><use href="#javamain"/></svg>
<div class="t" style="left:600.00px;top:81px;letter-spacing:-0.326px;font-weight:bold;">Persistencia08.java</div>
<svg class="a" style="left:711px;top:84px;" width="8" height="8"><use href="#closex"/></svg>
<svg class="a" style="left:735px;top:79px;" width="16" height="16"><use href="#java"/></svg>
<div class="t" style="left:755.00px;top:81px;letter-spacing:-0.354px;font-weight:bold;color:#222">AlumnoDB.java</div>
<svg class="a" style="left:846px;top:84px;" width="8" height="8"><use href="#closex"/></svg>
<svg class="a" style="left:870px;top:79px;" width="16" height="16"><use href="#java"/></svg>
<div class="t" style="left:890.00px;top:81px;letter-spacing:0.013px;color:#222">Alumno.java</div>
<svg class="a" style="left:963px;top:84px;" width="8" height="8"><use href="#closex"/></svg>
<svg class="a" style="left:1286px;top:81px" width="70" height="14"><path d="M7 2 L3 7 L7 12" fill="none" stroke="#a6b0ba" stroke-width="1"/><path d="M19 2 L23 7 L19 12" fill="none" stroke="#a6b0ba" stroke-width="1"/><path d="M35 4.5 L39.5 9 L44 4.5" fill="none" stroke="#505a64" stroke-width="1"/><rect x="53.5" y="2.5" width="9" height="9" fill="none" stroke="#505a64"/></svg>
<div class="a" style="left:443px;top:102px;width:912px;height:26px;background:#f0f0f0"></div>
<div class="a" style="left:443px;top:127px;width:912px;height:1px;background:#c6c6c6"></div>
<div class="a" style="left:445px;top:104px;width:53px;height:20px;background:#d8d8d8;border-radius:3px"></div>
<div class="t" style="left:454.25px;top:108px;letter-spacing:-0.450px;">Source</div>
<div class="t" style="left:511.25px;top:108px;letter-spacing:0.021px;">History</div>
<div class="a" style="left:563px;top:105px;width:1px;height:18px;background:#d0d0d0"></div>
<div class="a" style="left:658px;top:105px;width:1px;height:18px;background:#d0d0d0"></div>
<div class="a" style="left:775px;top:105px;width:1px;height:18px;background:#d0d0d0"></div>
<div class="a" style="left:848px;top:105px;width:1px;height:18px;background:#d0d0d0"></div>
<div class="a" style="left:899px;top:105px;width:1px;height:18px;background:#d0d0d0"></div>
<div class="a" style="left:950px;top:105px;width:1px;height:18px;background:#d0d0d0"></div>

<svg class="a" style="left:570px;top:107px" width="17" height="15"><rect x="0.5" y="0.5" width="14" height="13" fill="#fff" stroke="#9aa4b0"/><path d="M3 2 H5 M4 2 V12 M3 12 H5" stroke="#222" stroke-width="1"/><path d="M6 7 L10 3.5 V5.5 H13 V3 H15.5 V9 H10 V10.5 Z" fill="#f4b040" stroke="#a06a18" stroke-width="0.7"/></svg>
<svg class="a" style="left:593px;top:107px" width="16" height="16"><rect x="0.5" y="0.5" width="13" height="14" fill="#f4f8fc" stroke="#8a9ab0"/><path d="M3 4 H9 M3 6.5 H7" stroke="#6a7a90"/><path d="M4 11 L8 7.5 V9.5 H11 V7 H14.5 V13 H8 V14.5 Z" fill="#f4b040" stroke="#a06a18" stroke-width="0.7"/></svg>
<svg class="a" style="left:614px;top:113px" width="6" height="5"><path d="M0 0 H6 L3 4 Z" fill="#333"/></svg>
<svg class="a" style="left:625px;top:107px" width="16" height="16"><rect x="0.5" y="0.5" width="14" height="14" fill="#cfcfcf" stroke="#bdbdbd"/><path d="M3 10 L7 6.5 V8.5 H10 V6 H12.5 V12 H7 V13.5 Z" fill="#b8b8b8"/></svg>
<svg class="a" style="left:647px;top:113px" width="6" height="5"><path d="M0 0 H6 L3 4 Z" fill="#c8c8c8"/></svg>
<svg class="a" style="left:665px;top:107px" width="17" height="16"><rect x="0.5" y="0.5" width="12" height="5" fill="#f2b860" stroke="#b07a30" stroke-width="0.8"/><circle cx="8" cy="8" r="4.3" fill="#c8e0f8" stroke="#3a78c8" stroke-width="1.3"/><path d="M11 11 L15 15" stroke="#c8781a" stroke-width="2"/></svg>
<svg class="a" style="left:687px;top:107px" width="17" height="16"><rect x="4.5" y="0.5" width="11" height="5" fill="#f2b860" stroke="#b07a30" stroke-width="0.8"/><path d="M1 10 L6 5.5 V8 H15.5 V12 H6 V14.5 Z" fill="#b8dcf8" stroke="#3a78c8" stroke-width="1"/></svg>
<svg class="a" style="left:709px;top:107px" width="17" height="16"><rect x="4.5" y="0.5" width="11" height="5" fill="#f2b860" stroke="#b07a30" stroke-width="0.8"/><path d="M16 10 L11 5.5 V8 H1.5 V12 H11 V14.5 Z" fill="#b8dcf8" stroke="#3a78c8" stroke-width="1"/></svg>
<svg class="a" style="left:731px;top:107px" width="17" height="16"><rect x="0.5" y="0.5" width="11" height="6" fill="#f2b860" stroke="#b07a30" stroke-width="0.8"/><rect x="4.5" y="8.5" width="11" height="6" fill="#eee" stroke="#999" stroke-width="0.8"/></svg>
<svg class="a" style="left:753px;top:107px" width="17" height="16"><rect x="0.5" y="0.5" width="13" height="12" fill="none" stroke="#555" stroke-width="1" stroke-dasharray="1.5 1.5"/><path d="M10 7 L15.5 12 L12 12 L10.5 15 Z" fill="#fff" stroke="#555" stroke-width="0.8"/></svg>
<svg class="a" style="left:782px;top:107px" width="17" height="16"><path d="M7 1 H14 L16.5 4 L14 7 H7 Z" fill="#8cd0e8" stroke="#3a90b0" stroke-width="0.8"/><path d="M5.5 3 L10.5 8 H8 V14.5 H3 V8 H0.5 Z" fill="#f2b250" stroke="#b07a30" stroke-width="0.8"/></svg>
<svg class="a" style="left:804px;top:107px" width="17" height="16"><path d="M3 0.5 H8 V6 H10.5 L5.5 11 L0.5 6 H3 Z" fill="#f2b250" stroke="#b07a30" stroke-width="0.8"/><path d="M7 9 H14 L16.5 12 L14 15 H7 Z" fill="#8cd0e8" stroke="#3a90b0" stroke-width="0.8"/></svg>
<svg class="a" style="left:826px;top:107px" width="17" height="16"><path d="M0.5 0.5 H7 L9.5 3.5 L7 6.5 H0.5 Z" fill="#8cd0e8" stroke="#3a90b0" stroke-width="0.8"/><path d="M7.5 8.5 H13 L15.5 11.5 L13 14.5 H7.5 Z" fill="#eee" stroke="#999" stroke-width="0.8"/><path d="M3 8 L6 12" stroke="#333" stroke-dasharray="1 1"/></svg>
<svg class="a" style="left:855px;top:107px" width="17" height="16"><path d="M1 5 L5.5 1 V3 H10 V7 H5.5 V9 Z" fill="#b8dcf8" stroke="#3a78c8" stroke-width="0.9"/><path d="M11 2.5 H16 M11 4.5 H16 M11 6.5 H16 M11 8.5 H16 M1 11.5 H16 M1 13.5 H16" stroke="#555" stroke-width="1"/></svg>
<svg class="a" style="left:877px;top:107px" width="17" height="16"><path d="M10 5 L5.5 1 V3 H1 V7 H5.5 V9 Z" fill="#b8dcf8" stroke="#3a78c8" stroke-width="0.9"/><path d="M11 2.5 H16 M11 4.5 H16 M11 6.5 H16 M11 8.5 H16 M1 11.5 H16 M1 13.5 H16" stroke="#555" stroke-width="1"/></svg>
<svg class="a" style="left:907px;top:109px" width="14" height="14"><circle cx="6.5" cy="6.5" r="6" fill="#e05050" stroke="#b83a3a" stroke-width="0.8"/></svg>
<svg class="a" style="left:929px;top:109px" width="14" height="14"><rect x="0.5" y="0.5" width="12" height="12" fill="#ececec" stroke="#999"/></svg>
<svg class="a" style="left:957px;top:108px" width="16" height="15"><path d="M1 7 L3 1 H5 L3 7 Z M4.5 7 L6.5 1 H8.5 L6.5 7 Z" fill="#7cc84a"/><path d="M10 3.5 H15 M10 5.5 H15 M1 8.5 H15 M1 10.5 H15 M1 12.5 H15" stroke="#555" stroke-width="1"/></svg>
<svg class="a" style="left:979px;top:108px" width="16" height="15"><path d="M10 3.5 H15 M10 5.5 H15 M10 7.5 H15 M1 10.5 H15 M1 12.5 H15" stroke="#555" stroke-width="1"/></svg>
<svg class="a" style="left:1340px;top:109px" width="10" height="10"><rect x="0.5" y="0.5" width="9" height="9" fill="#fff" stroke="#777"/><path d="M5 1 V9 M1 5 H9" stroke="#111" stroke-width="1.4"/></svg>

<div class="a" style="left:443px;top:128px;width:912px;height:545px;background:#fff"></div>
<div class="a" style="left:443px;top:128px;width:28px;height:545px;background:#ebebe4"></div>
<div class="a" style="left:470px;top:128px;width:1px;height:545px;background:#d4d4cc"></div>
<div class="a" style="left:1332px;top:128px;width:23px;height:545px;background:#efefef"></div>
<div class="a" style="left:1355px;top:74px;width:1px;height:630px;background:#c8c8c8"></div>
<div class="a" style="left:442px;top:74px;width:1px;height:630px;background:#c0c0c0"></div>
<div class="a" style="left:500px;top:452px;width:832px;height:18px;background:#f6efdc"></div>
<div class="a" style="left:1140px;top:128px;width:1px;height:545px;background:#bcb8c4"></div>
<div class="a" style="left:500px;top:182px;width:1px;height:491px;background-image:linear-gradient(#d0d0d0 50%,transparent 50%);background-size:1px 2px"></div>
<div class="a" style="left:532px;top:236px;width:1px;height:306px;background-image:linear-gradient(#d0d0d0 50%,transparent 50%);background-size:1px 2px"></div>
<div class="a" style="left:564px;top:254px;width:1px;height:270px;background-image:linear-gradient(#d0d0d0 50%,transparent 50%);background-size:1px 2px"></div>
<div class="a" style="left:596px;top:362px;width:1px;height:18px;background-image:linear-gradient(#d0d0d0 50%,transparent 50%);background-size:1px 2px"></div>
<div class="a" style="left:596px;top:488px;width:1px;height:18px;background-image:linear-gradient(#d0d0d0 50%,transparent 50%);background-size:1px 2px"></div>
<div class="a" style="left:532px;top:596px;width:1px;height:77px;background-image:linear-gradient(#d0d0d0 50%,transparent 50%);background-size:1px 2px"></div>
<div class="a" style="left:564px;top:650px;width:1px;height:23px;background-image:linear-gradient(#d0d0d0 50%,transparent 50%);background-size:1px 2px"></div>
<div class="a" style="left:483px;top:128px;width:1px;height:9px;background:#8a8a8a"></div>
<div class="a" style="left:483px;top:137px;width:6px;height:1px;background:#8a8a8a"></div>
<div class="a" style="left:483px;top:233px;width:1px;height:318px;background:#8a8a8a"></div>
<div class="a" style="left:478px;top:222px;width:11px;height:11px;border:1px solid #8a8a8a;background:#fff"></div><div class="a" style="left:481px;top:227px;width:5px;height:1px;background:#444"></div>
<div class="a" style="left:478px;top:240px;width:11px;height:11px;border:1px solid #8a8a8a;background:#fff"></div><div class="a" style="left:481px;top:245px;width:5px;height:1px;background:#444"></div>
<div class="a" style="left:478px;top:348px;width:11px;height:11px;border:1px solid #8a8a8a;background:#fff"></div><div class="a" style="left:481px;top:353px;width:5px;height:1px;background:#444"></div>
<div class="a" style="left:478px;top:474px;width:11px;height:11px;border:1px solid #8a8a8a;background:#fff"></div><div class="a" style="left:481px;top:479px;width:5px;height:1px;background:#444"></div>
<div class="a" style="left:483px;top:389px;width:6px;height:1px;background:#8a8a8a"></div>
<div class="a" style="left:483px;top:515px;width:6px;height:1px;background:#8a8a8a"></div>
<div class="a" style="left:483px;top:533px;width:6px;height:1px;background:#8a8a8a"></div>
<div class="a" style="left:483px;top:551px;width:6px;height:1px;background:#8a8a8a"></div>
<div class="a" style="left:483px;top:593px;width:1px;height:80px;background:#8a8a8a"></div>
<div class="a" style="left:478px;top:582px;width:11px;height:11px;border:1px solid #8a8a8a;background:#fff"></div><div class="a" style="left:481px;top:587px;width:5px;height:1px;background:#444"></div>
<div class="a" style="left:478px;top:636px;width:11px;height:11px;border:1px solid #8a8a8a;background:#fff"></div><div class="a" style="left:481px;top:641px;width:5px;height:1px;background:#444"></div>
<svg class="a" style="left:458px;top:491px" width="16" height="16"><path d="M6 1 C9 1 10.5 3 10.5 5.5 C10.5 7.5 9 8.5 8.5 10 H4 C3.5 8.5 1.5 7.5 1.5 5.5 C1.5 3 3 1 6 1 Z" fill="#f2e070" stroke="#a89030" stroke-width="0.9"/><rect x="3.5" y="9.5" width="4" height="2.5" fill="#fff" stroke="#555" stroke-width="0.8"/><circle cx="10.5" cy="10" r="3.6" fill="#d41a1a" stroke="#a01010" stroke-width="0.5"/><rect x="10" y="7.8" width="1" height="2.8" fill="#fff"/><rect x="10" y="11.3" width="1" height="1" fill="#fff"/></svg>
<div class="a" style="left:1344px;top:135px;width:8px;height:8px;background:#ec1c1c"></div>
<div class="a" style="left:1332px;top:186px;width:10px;height:159px;background:#d6d6d6"></div>
<div class="a" style="left:1343px;top:271px;width:11px;height:3px;background:#a8a878"></div>
<div class="a" style="left:1343px;top:283px;width:11px;height:3px;background:#a8a878"></div>
<div class="a" style="left:1343px;top:291px;width:11px;height:3px;background:#a8a878"></div>
<div class="a" style="left:1345px;top:296px;width:7px;height:1px;background:#333"></div>
<div class="a" style="left:1343px;top:307px;width:11px;height:3px;background:#d01818"></div>
<div class="a" style="left:1343px;top:565px;width:11px;height:3px;background:#a8a878"></div>
<div class="a" style="left:1343px;top:572px;width:11px;height:3px;background:#a8a878"></div>
<div class="l" style="top:130px"><span class="k">import</span> java.util.Optional;</div>
<div class="ln" style="top:130px">12</div>
<div class="l" style="top:148px"></div>
<div class="ln" style="top:148px">13</div>
<div class="l" style="top:166px"><span class="k">public</span> <span class="k">class</span> <span class="b">Persistencia08</span> {</div>
<div class="ln" style="top:166px">14</div>
<div class="l" style="top:184px">    <span class="k">private</span> <span class="k">static</span> EntityManager <span class="f">manager</span>;</div>
<div class="ln" style="top:184px">15</div>
<div class="l" style="top:202px"></div>
<div class="ln" style="top:202px">16</div>
<div class="l" style="top:220px">    <span class="k">public</span> <span class="k">static</span> <span class="k">void</span> <span class="b i">main</span>(String[] args) {</div>
<div class="ln" style="top:220px">17</div>
<div class="l" style="top:238px">        <span class="k">try</span> (EntityManagerFactory factory = Persistence.<span class="i">createEntityManagerFactory</span>(<span class="s">&quot;lab-persistence-unit</span></div>
<div class="ln" style="top:238px">18</div>
<div class="l" style="top:256px">            <span class="f">manager</span> = factory.createEntityManager();</div>
<div class="ln" style="top:256px">19</div>
<div class="l" style="top:274px">            <span class="c">// cargaInicial();</span></div>
<div class="ln" style="top:274px">20</div>
<div class="l" style="top:292px"></div>
<div class="ln" style="top:292px">21</div>
<div class="l" style="top:310px">            AlumnoDB alumnoDB = <span class="k">new</span> AlumnoDB(<span class="f">manager</span>);</div>
<div class="ln" style="top:310px">22</div>
<div class="l" style="top:328px">            List&lt;Alumno&gt; alumnos = alumnoDB.findAll();</div>
<div class="ln" style="top:328px">23</div>
<div class="l" style="top:346px">            <span class="k">for</span> (Alumno a : alumnos) {</div>
<div class="ln" style="top:346px">24</div>
<div class="l" style="top:364px">                <span class="sy">System</span>.<span class="f">out</span>.println(<span class="s">&quot;Alumno: &quot;</span> + a.toString());</div>
<div class="ln" style="top:364px">25</div>
<div class="l" style="top:382px">            }</div>
<div class="ln" style="top:382px">26</div>
<div class="l" style="top:400px"></div>
<div class="ln" style="top:400px">27</div>
<div class="l" style="top:418px">            <span class="sy">System</span>.<span class="f">out</span>.println(<span class="s">&quot;&quot;</span>);</div>
<div class="ln" style="top:418px">28</div>
<div class="l" style="top:436px">            <span class="sy">System</span>.<span class="f">out</span>.println(<span class="s">&quot;*** FINDBYID&quot;</span>);</div>
<div class="ln" style="top:436px">29</div>
<div class="l" style="top:454px">            Optional&lt;Alumno&gt; alumno = alumnoDB.findById(2);</div>
<div class="ln" style="top:454px">30</div>
<div class="l" style="top:472px">            <span class="k">if</span> (alumno.isPresent()) {</div>
<div class="ln" style="top:472px">31</div>
<div class="l" style="top:490px">                System.<span class="f">out</span>.println(<span class="s">&quot;Alumno: &quot;</span> + <span class="err">a</span>.<span class="i">toString</span>());</div>
<div class="l" style="top:508px">            }</div>
<div class="ln" style="top:508px">33</div>
<div class="l" style="top:526px">        }</div>
<div class="ln" style="top:526px">34</div>
<div class="l" style="top:544px">    }</div>
<div class="ln" style="top:544px">35</div>
<div class="l" style="top:562px"></div>
<div class="ln" style="top:562px">36</div>
<div class="l" style="top:580px">    <span class="k">public</span> <span class="k">static</span> <span class="k">void</span> <span class="b i">cargaInicial</span>() {</div>
<div class="ln" style="top:580px">37</div>
<div class="l" style="top:598px">        <span class="f">manager</span>.getTransaction().begin();</div>
<div class="ln" style="top:598px">38</div>
<div class="l" style="top:616px"></div>
<div class="ln" style="top:616px">39</div>
<div class="l" style="top:634px">        <span class="k">try</span> {</div>
<div class="ln" style="top:634px">40</div>
<div class="l" style="top:652px">            Curso c1 = <span class="k">new</span> Curso(<span class="s">&quot;Matemáticas&quot;</span>, 1, <span class="s">&quot;Jorge Campos&quot;</span>);</div>
<div class="ln" style="top:652px">41</div>
<div class="a" style="left:936px;top:381px;width:3px;height:1px;background:#000"></div>
<div class="a" style="left:940px;top:381px;width:3px;height:1px;background:#000"></div>
<div class="a" style="left:939px;top:382px;width:1px;height:14px;background:#000"></div>
<div class="a" style="left:936px;top:396px;width:3px;height:1px;background:#000"></div>
<div class="a" style="left:940px;top:396px;width:3px;height:1px;background:#000"></div>
<div class="a" style="left:4px;top:670px;width:434px;height:33px;background:#f0f0f0;border-top:1px solid #d6d6d6;border-left:1px solid #cfcfcf"></div>
<div class="a" style="left:41px;top:679px;width:22px;height:18px;background:#d8d8d8;border-radius:3px"></div>
<div class="a" style="left:70px;top:679px;width:22px;height:18px;background:#d8d8d8;border-radius:3px"></div>
<div class="a" style="left:99px;top:679px;width:22px;height:18px;background:#d8d8d8;border-radius:3px"></div>
<div class="a" style="left:128px;top:679px;width:22px;height:18px;background:#d8d8d8;border-radius:3px"></div>
<div class="a" style="left:194px;top:679px;width:22px;height:18px;background:#d8d8d8;border-radius:3px"></div>
<div class="a" style="left:189px;top:680px;width:1px;height:16px;background:#d0d0d0"></div>
<div class="a" style="left:156px;top:680px;width:1px;height:16px;background:#d0d0d0"></div>
<div class="a" style="left:4px;top:703px;width:434px;height:1px;background:#d0d0d0"></div>
<svg class="a" style="left:217px;top:670px" width="10" height="6"><path d="M0 0 H10 L5 5 Z" fill="#b8b8b8"/></svg>

<svg class="a" style="left:15px;top:680px" width="17" height="16"><circle cx="5" cy="4" r="2.5" fill="#f0b060" stroke="#905020" stroke-width="0.6"/><circle cx="11" cy="4" r="2.5" fill="#f0b060" stroke="#905020" stroke-width="0.6"/><rect x="1" y="7" width="15" height="4" fill="#e88888" stroke="#a04040" stroke-width="0.6"/><path d="M2 11 V15 M5 11 V15 M8 11 V15 M11 11 V15 M14 11 V15" stroke="#4a70a8" stroke-width="1.6"/></svg>
<svg class="a" style="left:46px;top:681px" width="12" height="12"><rect x="0.5" y="0.5" width="11" height="11" fill="#a8d0f0" stroke="#3a6a9a"/></svg>
<svg class="a" style="left:78px;top:680px" width="6" height="14"><rect x="1.5" y="0.5" width="3" height="13" fill="#a8d0f0" stroke="#3a6a9a"/></svg>
<svg class="a" style="left:102px;top:679px" width="16" height="16"><path d="M4 7 V4.5 C4 1 12 1 12 4.5 V7" fill="none" stroke="#7a5a20" stroke-width="1.5"/><rect x="1.5" y="6.5" width="13" height="9" fill="#f0c060" stroke="#8a6a20"/><path d="M3 9 H13 M3 11 H13 M3 13 H13" stroke="#b08a30" stroke-width="0.8"/></svg>
<svg class="a" style="left:131px;top:679px" width="17" height="16"><path d="M7 0.8 L12.5 6 L7 11.2 L1.5 6 Z" fill="#f0c86a" stroke="#b08a30" stroke-width="0.8"/><rect x="0.5" y="7.5" width="8" height="7" fill="#a8cce8" stroke="#5a86b0" stroke-width="0.8"/><circle cx="12" cy="11" r="4" fill="#f29a9a" stroke="#c05a5a" stroke-width="0.8"/></svg>
<svg class="a" style="left:164px;top:680px" width="16" height="15"><rect x="0.5" y="4.5" width="10" height="10" fill="#f0c060" stroke="#8a6a20" stroke-width="0.8"/><path d="M6 1 L10 5 L6 9 L2 5 Z" fill="#f0e0a0" stroke="#b08a30" stroke-width="0.7"/><circle cx="11" cy="9" r="3.5" fill="#f29a9a" stroke="#c05a5a" stroke-width="0.7"/></svg>
<svg class="a" style="left:197px;top:679px" width="17" height="17"><path d="M4 1 V13 M1 10 L4 14 L7 10" fill="none" stroke="#333" stroke-width="1.3"/><path d="M9 1.5 H14 L9.5 7 H14.5" fill="none" stroke="#c89a20" stroke-width="1.2"/><path d="M9 16 V11 L11.5 8.5 L14 11 V16 M9 13 H14" fill="none" stroke="#c89a20" stroke-width="1.2"/></svg>
<svg class="a" style="left:226px;top:679px" width="18" height="16"><path d="M4 1 V13 M1 10 L4 14 L7 10" fill="none" stroke="#333" stroke-width="1.3"/><path d="M9 2 H16 M9 5 H15 M9 8 H16 M9 11 H14 M9 14 H16" stroke="#555" stroke-width="1.2"/></svg>

<svg class="a" style="left:9px;top:711px" width="11" height="11"><path d="M0.5 3.5 H7.5 V10.5 H0.5 Z M3 3.5 V0.5 H10.5 V8 H7.5" fill="none" stroke="#555"/></svg>
<svg class="a" style="left:36px;top:708px" width="16" height="16"><rect x="0.5" y="0.5" width="13" height="13" fill="#f4f8fc" stroke="#6a7a8a"/><rect x="1" y="1" width="12" height="2.5" fill="#8aa0b8"/><ellipse cx="10" cy="12" rx="5.5" ry="3.5" fill="#f0c070" stroke="#a07020" stroke-width="0.8"/></svg>
<div class="t" style="left:56.30px;top:710px;letter-spacing:0.280px;">Output</div>
<div class="a" style="left:443px;top:673px;width:912px;height:10px;background:#ececec"></div>
<div class="a" style="left:500px;top:673px;width:690px;height:10px;background:#d6d6d6"></div>
<div class="a" style="left:443px;top:683px;width:912px;height:21px;background:#f0f0f0;border-top:1px solid #d6d6d6;border-bottom:1px solid #cdcdcd"></div>
<svg class="a" style="left:452px;top:686px;" width="16" height="14"><use href="#cls"/></svg>
<div class="t" style="left:473.00px;top:687px;letter-spacing:-0.157px;">com.laboratorio.persistencia08.Persistencia08</div>
<svg class="a" style="left:717px;top:685px" width="10" height="16"><path d="M1.5 1.5 L7.5 8 L1.5 14.5 M1.5 4 L5.5 8 L1.5 12" fill="none" stroke="#b0b0b0" stroke-width="1.2"/></svg>
<svg class="a" style="left:743px;top:688px;" width="12" height="12"><use href="#meth"/></svg>
<div class="t" style="left:760.00px;top:687px;letter-spacing:0.167px;">main</div>
<svg class="a" style="left:793px;top:685px" width="10" height="16"><path d="M1.5 1.5 L7.5 8 L1.5 14.5 M1.5 4 L5.5 8 L1.5 12" fill="none" stroke="#b0b0b0" stroke-width="1.2"/></svg>
<div class="t" style="left:812px;top:687px;">try</div>
<svg class="a" style="left:833px;top:685px" width="10" height="16"><path d="M1.5 1.5 L7.5 8 L1.5 14.5 M1.5 4 L5.5 8 L1.5 12" fill="none" stroke="#b0b0b0" stroke-width="1.2"/></svg>
<div class="t" style="left:854px;top:687px;">if</div>
<div class="t" style="left:864.00px;top:687px;letter-spacing:-0.092px;color:#8a8a8a">(alumno.isPresent())</div>
<svg class="a" style="left:977px;top:685px" width="10" height="16"><path d="M1.5 1.5 L7.5 8 L1.5 14.5 M1.5 4 L5.5 8 L1.5 12" fill="none" stroke="#b0b0b0" stroke-width="1.2"/></svg>
<svg class="a" style="left:1341px;top:689px;" width="8" height="8"><use href="#closex"/></svg>
<div class="a" style="left:1131px;top:705px;width:1px;height:22px;background:#d6d6d6"></div>
<div class="a" style="left:1241px;top:705px;width:1px;height:22px;background:#d6d6d6"></div>
<div class="a" style="left:1267px;top:705px;width:1px;height:22px;background:#d6d6d6"></div>
<div class="t" style="left:1173.00px;top:710px;letter-spacing:-0.825px;">30:13</div>
<div class="t" style="left:1245.00px;top:710px;letter-spacing:-1.150px;">INS</div>
<div class="t" style="left:1269.00px;top:710px;letter-spacing:-0.547px;">Unix (LF)</div>
<div class="a" style="left:0px;top:728px;width:1360px;height:40px;background:#101010"></div>
<svg class="a" style="left:16px;top:740px" width="17" height="17"><path d="M0 2.3 L6.8 1.4 V7.8 H0 Z M7.7 1.3 L17 0 V7.8 H7.7 Z M0 8.8 H6.8 V15.4 L0 14.5 Z M7.7 8.8 H17 V17 L7.7 15.6 Z" fill="#fff"/></svg>
<svg class="a" style="left:63px;top:739px" width="18" height="18"><circle cx="10.5" cy="7" r="5.8" fill="none" stroke="#fff" stroke-width="1.5"/><path d="M6.5 11 L1 16.5" stroke="#fff" stroke-width="1.7"/></svg>
<svg class="a" style="left:112px;top:736px" width="22" height="24"><path d="M4 1 H18 L21 5 L20 15 L11 23 L2 15 L1 5 Z" fill="#f05a24"/><path d="M7 8 L11 6 L15 8 L14 13 L11 16 L8 13 Z" fill="#fff"/></svg>
<svg class="a" style="left:161px;top:738px" width="22" height="20"><path d="M0 2 H8 L10 4 H22 V19 H0 Z" fill="#f8d06a"/><rect x="0" y="6" width="22" height="13" fill="#ffe08a"/><rect x="7" y="12" width="8" height="5" fill="#2a8ad8"/></svg>
<svg class="a" style="left:208px;top:737px" width="26" height="22"><rect x="8" y="1" width="17" height="20" rx="1.5" fill="#41a5ee"/><rect x="8" y="11" width="17" height="10" fill="#185abd"/><rect x="0" y="5" width="13" height="13" rx="1" fill="#185abd"/><text x="1.5" y="15.5" font-size="10" font-weight="bold" fill="#fff" font-family="Liberation Sans">W</text></svg>
<svg class="a" style="left:257px;top:737px" width="26" height="22"><circle cx="15" cy="11" r="10" fill="#ed6c47"/><path d="M15 1 A10 10 0 0 1 25 11 H15 Z" fill="#ff8f6b"/><rect x="0" y="5" width="13" height="13" rx="1" fill="#c43e1c"/><text x="3" y="15.5" font-size="10" font-weight="bold" fill="#fff" font-family="Liberation Sans">P</text></svg>
<div class="a" style="left:295px;top:728px;width:48px;height:40px;background:#2a2a2a"></div>
<svg class="a" style="left:307px;top:736px;" width="23" height="24"><use href="#nb"/></svg>
<svg class="a" style="left:355px;top:735px" width="25" height="25"><circle cx="12.5" cy="12.5" r="11.3" fill="#f4f4f4" stroke="#3a9a9a" stroke-width="2"/><path d="M4 10 C6 6 12 5 16 6.5 C19 7.5 21 10 20 12 C19 14 16 14 15 16 L14 21 C11 22 8 21 6 19 L8 14 Z" fill="#fff" stroke="#222" stroke-width="0.9"/><path d="M11 17 C12 14 14 13 16 13.5 L15 20 C13 21 11 20.5 11 17 Z" fill="#2a2a2a"/><circle cx="15" cy="9" r="1.2" fill="#222"/></svg>
<svg class="a" style="left:405px;top:735px" width="23" height="25"><defs><linearGradient id="npg" x1="0" y1="0" x2="0" y2="1"><stop offset="0.3" stop-color="#f4f8e8"/><stop offset="1" stop-color="#52c020"/></linearGradient></defs><path d="M0.5 1 H15 L18.5 4.5 V24 H0.5 Z" fill="url(#npg)" stroke="#c8c8c8" stroke-width="0.8"/><path d="M5 9 V18 M7 9 H10 M11 9 H13" stroke="#222" stroke-width="1.4"/><path d="M13 18 L21.5 2" stroke="#e0b020" stroke-width="2.6"/><path d="M12.5 19 L13 17.5" stroke="#333" stroke-width="1"/></svg>
<div class="a" style="left:103px;top:766px;width:40px;height:2px;background:#76b9ed"></div>
<div class="a" style="left:152px;top:766px;width:40px;height:2px;background:#76b9ed"></div>
<div class="a" style="left:201px;top:766px;width:39px;height:2px;background:#76b9ed"></div>
<div class="a" style="left:250px;top:766px;width:40px;height:2px;background:#76b9ed"></div>
<div class="a" style="left:295px;top:766px;width:48px;height:2px;background:#76b9ed"></div>
<div class="a" style="left:348px;top:766px;width:40px;height:2px;background:#76b9ed"></div>
<div class="a" style="left:397px;top:766px;width:40px;height:2px;background:#76b9ed"></div>
<svg class="a" style="left:1146px;top:742px" width="14" height="9"><path d="M1 8 L7 2 L13 8" fill="none" stroke="#fff" stroke-width="1.4"/></svg>
<svg class="a" style="left:1168px;top:740px" width="18" height="16"><rect x="3.5" y="2.5" width="13" height="9" fill="none" stroke="#fff"/><path d="M10 11.5 V14 M6 14.5 H14 M0.5 0.5 V8 M0.5 4 H3" stroke="#fff"/></svg>
<svg class="a" style="left:1193px;top:741px" width="17" height="13"><rect x="4.5" y="3.5" width="11" height="7" fill="none" stroke="#fff"/><rect x="6" y="5" width="5" height="4" fill="#fff"/><rect x="15.5" y="5.5" width="1.5" height="3" fill="#fff"/><path d="M0 7 H4 M2 1 V5" stroke="#fff"/></svg>
<svg class="a" style="left:1217px;top:740px" width="17" height="16"><path d="M1 5.5 H4 L8 2 V14 L4 10.5 H1 Z" fill="none" stroke="#fff"/><path d="M10.5 5.5 C11.5 7 11.5 9 10.5 10.5 M12.5 3.5 C14.5 6 14.5 10 12.5 12.5 M14.5 1.5 C17 5 17 11 14.5 14.5" fill="none" stroke="#fff"/></svg>
<div class="t" style="left:1258.00px;top:732px;letter-spacing:-0.750px;color:#fff">17:04</div>
<div class="t" style="left:1242.80px;top:750px;letter-spacing:-0.222px;color:#fff">01/07/2024</div>
<svg class="a" style="left:1318px;top:739px" width="18" height="17"><path d="M0.5 0.5 H16.5 V12.5 H10 L6.5 16 V12.5 H0.5 Z" fill="none" stroke="#fff"/></svg>
<div class="a" style="left:1355px;top:728px;width:1px;height:40px;background:#3a3a3a"></div>
</div>
</body></html>
